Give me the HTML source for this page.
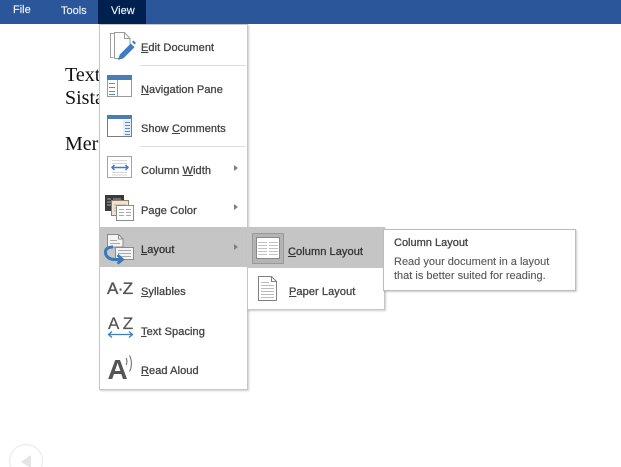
<!DOCTYPE html>
<html>
<head>
<meta charset="utf-8">
<style>
html,body{margin:0;padding:0;width:621px;height:467px;overflow:hidden;background:#fff;font-family:"Liberation Sans",sans-serif}
#w{position:absolute;left:0;top:0;width:621px;height:467px;overflow:hidden;filter:blur(.3px)}
.a{position:absolute}
.t{position:absolute;font-size:11px;line-height:14px;color:#444;white-space:nowrap;-webkit-text-stroke:.3px #444;letter-spacing:.08px}
.t u{text-underline-offset:1px}
.h{position:absolute;top:0;font-size:11px;line-height:14px;color:#eef2f8;white-space:nowrap;-webkit-text-stroke:.15px #eef2f8}
.d{position:absolute;left:65px;font:20px/23px "Liberation Serif",serif;color:#111;white-space:nowrap}
.sep{position:absolute;height:1px;background:#dcdcdc}
svg{position:absolute;left:0;top:0}
</style>
</head>
<body>
<div id="w">
<div class="a" style="left:0;top:0;width:621px;height:24px;background:#2b579a"></div>
<div class="a" style="left:98px;top:0;width:48px;height:24px;background:#002050"></div>
<div class="h" style="left:13px;top:3px">File</div>
<div class="h" style="left:61px;top:4px">Tools</div>
<div class="h" style="left:111px;top:4px">View</div>

<div class="d" style="top:64px">Text</div>
<div class="d" style="top:87px">Sista</div>
<div class="d" style="top:133px">Mer</div>

<!-- main menu -->
<div class="a" style="left:99px;top:24px;width:147px;height:364px;background:#fff;border:1px solid #c6c6c6;box-shadow:1px 1px 2px rgba(0,0,0,.2)"></div>
<div class="a" style="left:100px;top:227px;width:147px;height:40px;background:#c5c5c5"></div>
<div class="sep" style="left:140px;top:65px;width:106px"></div>
<div class="sep" style="left:140px;top:146px;width:106px"></div>

<!-- submenu -->
<div class="a" style="left:247px;top:227px;width:136px;height:81px;background:#fff;border:1px solid #c6c6c6;box-shadow:1px 1px 2px rgba(0,0,0,.2)"></div>
<div class="a" style="left:248px;top:228px;width:136px;height:40px;background:#c5c5c5"></div>
<div class="a" style="left:252px;top:233px;width:30px;height:29px;border:1px solid #9a9a9a;background:#b4b4b4"></div>

<!-- tooltip -->
<div class="a" style="left:383px;top:229px;width:191px;height:60px;background:#fff;border:1px solid #bcbcbc;box-shadow:1px 1px 2px rgba(0,0,0,.2)"></div>
<div class="t" style="left:394px;top:236px;color:#444;-webkit-text-stroke:.3px #444;letter-spacing:0">Column Layout</div>
<div class="t" style="left:394px;top:255px;color:#555;-webkit-text-stroke:.1px #555;letter-spacing:0">Read your document in a layout</div>
<div class="t" style="left:394px;top:269px;color:#555;-webkit-text-stroke:.1px #555;letter-spacing:0">that is better suited for reading.</div>

<!-- labels -->
<div class="t" style="left:141px;top:41px"><u>E</u>dit Document</div>
<div class="t" style="left:141px;top:83px"><u>N</u>avigation Pane</div>
<div class="t" style="left:141px;top:122px">Show <u>C</u>omments</div>
<div class="t" style="left:141px;top:164px">Column <u>W</u>idth</div>
<div class="t" style="left:141px;top:204px">Page Color</div>
<div class="t" style="left:141px;top:243px;color:#333;-webkit-text-stroke-color:#333"><u>L</u>ayout</div>
<div class="t" style="left:141px;top:285px"><u>S</u>yllables</div>
<div class="t" style="left:141px;top:325px"><u>T</u>ext Spacing</div>
<div class="t" style="left:141px;top:364px"><u>R</u>ead Aloud</div>
<div class="t" style="left:288px;top:245px;color:#333;-webkit-text-stroke-color:#333"><u>C</u>olumn Layout</div>
<div class="t" style="left:289px;top:285px"><u>P</u>aper Layout</div>

<svg width="621" height="467" viewBox="0 0 621 467" fill="none">
  <!-- Edit Document -->
  <path d="M115 33.500h-4.500v24h3" stroke="#a0a0a0"/>
  <path d="M114.500 58.500v-26h10l5.500 6v9M114.500 58.500h5" stroke="#9a9a9a" fill="#fff"/>
  <path d="M124.500 32.500v6h5.500" stroke="#9a9a9a"/>
  <path d="M118 60l1.800-5.500 11-11 3.700 3.700-11 11z" fill="#3f7cc0"/>
  <path d="M132 42l1.500-1.500 2.500 2.500-1.500 1.500z" fill="#3f7cc0"/>
  <!-- Navigation Pane -->
  <rect x="107.500" y="75.500" width="24" height="21" fill="#fff" stroke="#9a9a9a"/>
  <rect x="107" y="75" width="25" height="5" fill="#4a7db5"/>
  <path d="M117.500 80v16" stroke="#9a9a9a"/>
  <path d="M109 83.500h6M109 87.500h6M109 91.500h6M109 94.500h6" stroke="#5b8dc5"/>
  <!-- Show Comments -->
  <rect x="107.500" y="115.500" width="24" height="21" fill="#fff" stroke="#7c7c7c"/>
  <rect x="107" y="115" width="25" height="4" fill="#4a7db5"/>
  <rect x="123" y="120" width="8" height="16" fill="#e6edf5"/>
  <path d="M125 122.500h5M125 125.500h5M125 128.500h5M125 131.500h5M125 134.500h5" stroke="#5b8dc5"/>
  <!-- Column Width -->
  <rect x="107.500" y="156.500" width="24" height="21" fill="#fff" stroke="#a5a5a5"/>
  <path d="M112 160.500h15M112 163.500h15M112 172.500h15M112 175h15" stroke="#d6d6d6"/>
  <path d="M112 167.500h16M114.500 165l-2.500 2.500 2.500 2.500M125.500 165l2.500 2.500-2.500 2.500" stroke="#3f7cc0" stroke-width="1.500"/>
  <!-- Page Color -->
  <rect x="105" y="195" width="19" height="16" fill="#3a3a3a"/>
  <path d="M107 199h4M107 202h4M107 205h4M113 199h8M113 202h3" stroke="#aaa"/>
  <rect x="111.500" y="200.500" width="17" height="15" fill="#efe4d4" stroke="#8c8070"/>
  <path d="M114 205h12M114 208h12M114 211h12" stroke="#b5a996"/>
  <rect x="116.500" y="205.500" width="17" height="15" fill="#fff" stroke="#8a8a8a"/>
  <path d="M119 209.500h5M126 209.500h5M119 212.500h5M126 212.500h5M119 215.500h5M126 215.500h5" stroke="#aaa"/>
  <!-- Layout -->
  <path d="M107.500 247v-12.500h11l4.500 4.500v8z" stroke="#8a8a8a" fill="#f4f4f4"/>
  <path d="M118.500 234.500v4.500h4.500" stroke="#8a8a8a"/>
  <path d="M110 240.500h7M110 243.500h10" stroke="#aaa"/>
  <rect x="115.500" y="247.500" width="18" height="12" fill="#f4f4f4" stroke="#8a8a8a"/>
  <path d="M118 250.500h13M118 253.500h13M118 256.500h13" stroke="#aaa"/>
  <path d="M113 247c-5 0-8 2-7.500 6s4.500 6.500 8.500 6.500h7" stroke="#3a78b8" stroke-width="3"/>
  <path d="M117.500 255l5 4.500-5 4" stroke="#3a78b8" stroke-width="2.800"/>
  <!-- Chevrons -->
  <path d="M234 165v6l4-3zM234 204v6l4-3zM234 244v6l4-3z" fill="#808080"/>
  <!-- Column Layout icon -->
  <rect x="256.500" y="237.500" width="23" height="21" fill="#fff" stroke="#8a8a8a"/>
  <path d="M258 242.500h9M269 242.500h9M258 245.500h9M269 245.500h9M258 248.500h9M269 248.500h9M258 251.500h9M269 251.500h9M258 254.500h9M269 254.500h9" stroke="#c2c2c2"/>
  <!-- Paper Layout icon -->
  <path d="M258.500 300.500v-24h13l5 5v19z" fill="#fff" stroke="#808080"/>
  <path d="M271.500 276.500v5h5" stroke="#808080"/>
  <path d="M261 282.500h8M261 285.500h13M261 288.500h13M261 291.500h13M261 294.500h13M261 297.500h13" stroke="#bbb"/>
  <!-- Back circle -->
  <circle cx="26" cy="461" r="16.500" fill="#fff" stroke="#efefef" stroke-width="1.500"/>
  <path d="M31 455v13l-10-6z" fill="#e4e4e4"/>
</svg>

<!-- A-Z icons as text -->
<div class="a" style="left:107px;top:279px;font-size:17px;line-height:19px;color:#555;white-space:nowrap;letter-spacing:-.6px;-webkit-text-stroke:.35px #555">A·Z</div>
<div class="a" style="left:108px;top:314px;font-size:17px;line-height:19px;color:#555;letter-spacing:-.2px;white-space:nowrap;-webkit-text-stroke:.2px #555">A Z</div>
<svg width="621" height="467" viewBox="0 0 621 467" fill="none">
  <path d="M108.500 334.500h24M112 331.500l-3.500 3 3.500 3M129 331.500l3.500 3-3.500 3" stroke="#3f7cc0" stroke-width="1.300"/>
  <path d="M126 358c1.300 2 1.300 5 0 7M129.500 355.500c2.500 4 2.500 12 0 16" stroke="#666"/>
</svg>
<div class="a" style="left:107.500px;top:355px;font-size:28px;line-height:30px;font-weight:bold;color:#555;white-space:nowrap">A</div>
</div>
</body>
</html>
